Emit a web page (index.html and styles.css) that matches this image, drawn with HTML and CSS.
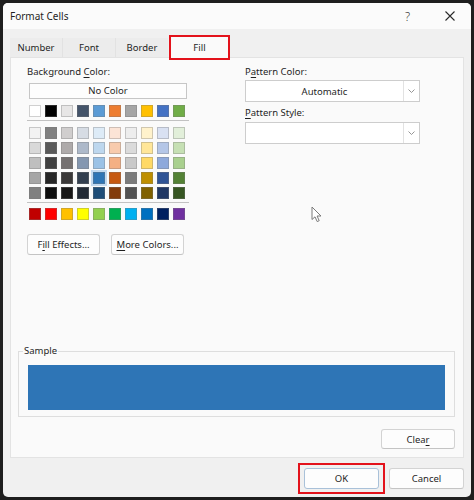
FILE: index.html
```html
<!DOCTYPE html>
<html>
<head>
<meta charset="utf-8">
<link rel="stylesheet" href="styles.css">
</head>
<body>
<div class="window">
  <div class="titlebar">
    <span class="title">Format Cells</span>
    <span class="help">?</span>
    <svg class="close" width="10" height="10" viewBox="0 0 10 10"><path d="M0.5 0.5 L9.5 9.5 M9.5 0.5 L0.5 9.5" stroke="#2b2b2b" stroke-width="1.1" fill="none"/></svg>
  </div>
  <div class="tabs">
    <div class="tab">Number</div>
    <div class="tab">Font</div>
    <div class="tab tab-b">Border</div>
    <div class="tab active">Fill</div>
  </div>
  <div class="panel">
    <div class="top">
      <div class="bgcol">
        <div class="label">Background <u>C</u>olor:</div>
        <div class="nocolor">No Color</div>
        <div class="swrow">
          <span class="sw" style="background:#FFFFFF"></span>
          <span class="sw" style="background:#000000"></span>
          <span class="sw" style="background:#E7E6E6"></span>
          <span class="sw" style="background:#44546A"></span>
          <span class="sw" style="background:#5B9BD5"></span>
          <span class="sw" style="background:#ED7D31"></span>
          <span class="sw" style="background:#A5A5A5"></span>
          <span class="sw" style="background:#FFC000"></span>
          <span class="sw" style="background:#4472C4"></span>
          <span class="sw" style="background:#70AD47"></span>
        </div>
        <div class="sep"></div>
        <div class="theme">
          <span class="sw" style="background:#F2F2F2"></span>
          <span class="sw" style="background:#808080"></span>
          <span class="sw" style="background:#D0CECE"></span>
          <span class="sw" style="background:#D6DCE4"></span>
          <span class="sw" style="background:#DDEBF7"></span>
          <span class="sw" style="background:#FCE4D6"></span>
          <span class="sw" style="background:#EDEDED"></span>
          <span class="sw" style="background:#FFF2CC"></span>
          <span class="sw" style="background:#D9E1F2"></span>
          <span class="sw" style="background:#E2EFDA"></span>

          <span class="sw" style="background:#D9D9D9"></span>
          <span class="sw" style="background:#595959"></span>
          <span class="sw" style="background:#AEAAAA"></span>
          <span class="sw" style="background:#ADB9CA"></span>
          <span class="sw" style="background:#BDD7EE"></span>
          <span class="sw" style="background:#F8CBAD"></span>
          <span class="sw" style="background:#DBDBDB"></span>
          <span class="sw" style="background:#FFE699"></span>
          <span class="sw" style="background:#B4C6E7"></span>
          <span class="sw" style="background:#C6E0B4"></span>

          <span class="sw" style="background:#BFBFBF"></span>
          <span class="sw" style="background:#404040"></span>
          <span class="sw" style="background:#757171"></span>
          <span class="sw" style="background:#8497B0"></span>
          <span class="sw" style="background:#9BC2E6"></span>
          <span class="sw" style="background:#F4B084"></span>
          <span class="sw" style="background:#C9C9C9"></span>
          <span class="sw" style="background:#FFD966"></span>
          <span class="sw" style="background:#8EA9DB"></span>
          <span class="sw" style="background:#A9D08E"></span>

          <span class="sw" style="background:#A6A6A6"></span>
          <span class="sw" style="background:#262626"></span>
          <span class="sw" style="background:#3A3838"></span>
          <span class="sw" style="background:#333F4F"></span>
          <span class="sw selected" style="background:#2F75B5"></span>
          <span class="sw" style="background:#C65911"></span>
          <span class="sw" style="background:#7B7B7B"></span>
          <span class="sw" style="background:#BF8F00"></span>
          <span class="sw" style="background:#305496"></span>
          <span class="sw" style="background:#548235"></span>

          <span class="sw" style="background:#808080"></span>
          <span class="sw" style="background:#0D0D0D"></span>
          <span class="sw" style="background:#171616"></span>
          <span class="sw" style="background:#222A35"></span>
          <span class="sw" style="background:#1F4E78"></span>
          <span class="sw" style="background:#833C0C"></span>
          <span class="sw" style="background:#525252"></span>
          <span class="sw" style="background:#806000"></span>
          <span class="sw" style="background:#203764"></span>
          <span class="sw" style="background:#375623"></span>
        </div>
        <div class="sep sep2"></div>
        <div class="swrow std">
          <span class="sw" style="background:#C00000"></span>
          <span class="sw" style="background:#FF0000"></span>
          <span class="sw" style="background:#FFC000"></span>
          <span class="sw" style="background:#FFFF00"></span>
          <span class="sw" style="background:#92D050"></span>
          <span class="sw" style="background:#00B050"></span>
          <span class="sw" style="background:#00B0F0"></span>
          <span class="sw" style="background:#0070C0"></span>
          <span class="sw" style="background:#002060"></span>
          <span class="sw" style="background:#7030A0"></span>
        </div>
        <div class="btns">
          <button class="btn wide">F<u>i</u>ll Effects...</button>
          <button class="btn wide"><u>M</u>ore Colors...</button>
        </div>
      </div>
      <div class="pattern">
        <div class="label">P<u>a</u>ttern Color:</div>
        <div class="combo">
          <span class="combo-text">Automatic</span>
          <span class="combo-arrow"><svg width="7" height="4" viewBox="0 0 7 4"><path d="M0.5 0.5 L3.5 3.5 L6.5 0.5" stroke="#8a8a8a" stroke-width="0.9" fill="none"/></svg></span>
        </div>
        <div class="label label2"><u>P</u>attern Style:</div>
        <div class="combo combo2">
          <span class="combo-text"></span>
          <span class="combo-arrow"><svg width="7" height="4" viewBox="0 0 7 4"><path d="M0.5 0.5 L3.5 3.5 L6.5 0.5" stroke="#8a8a8a" stroke-width="0.9" fill="none"/></svg></span>
        </div>
      </div>
    </div>
    <svg class="cursor" width="13" height="17" viewBox="0 0 13 17"><path d="M1 1 L1 13.5 L4 10.8 L6.2 15.6 L8.2 14.7 L6.1 10 L10 10 Z" fill="#ffffff" stroke="#7a7a7a" stroke-width="1" stroke-linejoin="round"/></svg>
    <fieldset class="sample">
      <legend>Sample</legend>
      <div class="sample-fill"></div>
    </fieldset>
    <div class="clear-row">
      <button class="btn clear">Clea<u>r</u></button>
    </div>
  </div>
  <div class="footer">
    <div class="okwrap"><button class="btn ok">OK</button></div>
    <button class="btn cancel">Cancel</button>
  </div>
</div>
</body>
</html>
```
FILE: styles.css
```css
* { box-sizing: border-box; }
html, body { margin: 0; padding: 0; }
body {
  width: 474px;
  height: 500px;
  overflow: hidden;
  background: #1e1e1e;
  font-family: "Noto Sans", "Open Sans", sans-serif;
  font-size: 9.5px;
  color: #1f1f1f;
}
u { text-decoration-thickness: 1px; text-underline-offset: 1.5px; }

.window {
  margin: 3px 0 0 3px;
  width: 468px;
  height: 494px;
  background: #f0f0f0;
  display: flex;
  flex-direction: column;
  border-radius: 5px;
  overflow: hidden;
}

.titlebar {
  height: 26px;
  flex: none;
  background: #fbfbfb;
  display: flex;
  align-items: center;
  padding: 0 16px 0 7px;
}
.title { font-size: 10px; }
.help {
  margin-left: auto;
  font-size: 12px;
  color: #333;
  font-weight: 300;
}
.close { margin-left: 35px; }

.tabs {
  height: 28px;
  flex: none;
  display: flex;
  align-items: flex-end;
  padding-left: 7px;
  background: #f0f0f0;
}
.tab {
  width: 53px;
  height: 19px;
  display: flex;
  align-items: center;
  justify-content: center;
  background: #ececec;
  border-right: 1px solid #e2e2e2;
}
.tab-b { width: 52px; border-right: none; }
.tab.active {
  width: 61px;
  height: 25px;
  margin-left: 1px;
  margin-bottom: -3px;
  border: 2px solid #e3121b;
  background: #fafafa;
  position: relative;
  z-index: 1;
}

.panel {
  flex: 1;
  margin: 0 7px;
  background: #fafafa;
  border: 1px solid #e3e3e3;
  position: relative;
  display: flex;
  flex-direction: column;
}

.top {
  display: flex;
  padding: 7px 0 0 16px;
}
.bgcol { width: 161px; }
.label { line-height: 14px; height: 14px; white-space: nowrap; }
.nocolor {
  margin: 4px 0 0 2px;
  width: 158px;
  height: 16px;
  border: 1px solid #c6c6c6;
  background: #fdfdfd;
  text-align: center;
  line-height: 14px;
}
.swrow {
  display: flex;
  gap: 4px;
  margin: 6px 0 0 2px;
}
.std { margin-top: 5px; }
.sw {
  display: block;
  width: 12px;
  height: 12px;
  border: 1px solid rgba(120, 120, 120, 0.35);
}
.sep {
  width: 162px;
  height: 1px;
  background: #c2c2c2;
  margin-top: 3px;
}
.theme {
  display: grid;
  grid-template-columns: repeat(10, 12px);
  column-gap: 4px;
  row-gap: 3px;
  margin: 6px 0 0 2px;
}
.sep2 { margin-top: 3px; }
.selected { box-shadow: 0 0 0 2px #c3daf0; }

.btn {
  font-family: inherit;
  font-size: 9.5px;
  color: #1f1f1f;
  background: #fdfdfd;
  border: 1px solid #d3d3d3;
  border-bottom-color: #c4c4c4;
  border-radius: 3px;
  padding: 0;
  height: 21px;
  width: 75px;
}
.btns {
  display: flex;
  gap: 11px;
  margin-top: 14px;
}
.btn.wide { width: 73px; }

.pattern {
  margin-left: 57px;
  width: 176px;
}
.combo {
  margin-top: 1px;
  width: 175px;
  height: 22px;
  border: 1px solid #cdcdcd;
  background: #ffffff;
  display: flex;
}
.combo-text {
  flex: 1;
  display: flex;
  align-items: center;
  justify-content: center;
}
.combo-arrow {
  width: 16px;
  border-left: 1px solid #e2e2e2;
  display: flex;
  align-items: center;
  justify-content: center;
}
.label2 { margin-top: 4px; }
.combo2 { margin-top: 2px; }

.cursor {
  position: absolute;
  left: 300px;
  top: 148px;
}

.sample {
  margin: auto 8px 0 7px;
  border: 1px solid #dedede;
  padding: 0 9px 6px 9px;
  min-width: 0;
}
.sample legend {
  padding: 0 1px;
  margin-left: -5px;
  line-height: 14px;
}
.sample-fill {
  margin-top: 7px;
  height: 45px;
  background: #2e75b6;
}

.clear-row {
  display: flex;
  justify-content: flex-end;
  padding: 12px 8px 8px 0;
}
.btn.clear { width: 74px; height: 20px; }

.footer {
  height: 39px;
  flex: none;
  display: flex;
  justify-content: flex-end;
  align-items: flex-start;
  padding: 5px 7px 0 0;
}
.okwrap {
  border: 2px solid #e3121b;
  padding: 3px 4px;
  margin-right: 4px;
  display: flex;
}
.btn.ok { border-color: #a9c1d9; }
.cancel { margin-top: 5px; }
```
